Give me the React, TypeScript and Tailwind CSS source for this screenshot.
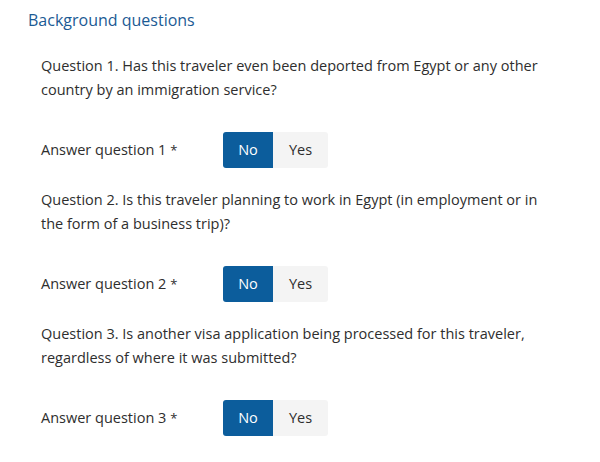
import React from "react";

const questions = [
  "Question 1. Has this traveler even been deported from Egypt or any other country by an immigration service?",
  "Question 2. Is this traveler planning to work in Egypt (in employment or in the form of a business trip)?",
  "Question 3. Is another visa application being processed for this traveler, regardless of where it was submitted?",
];

export default function App() {
  return (
    <div className="w-[600px] h-[462px] bg-white overflow-hidden text-[#2e2e2e]" style={{ fontFamily: '"Open Sans", sans-serif' }}>
      <h2 className="pl-[28px] pt-[8px] text-[16px] leading-[24px] text-[#1b5a94]">Background questions</h2>
      <div className="pl-[41px] pr-[45px]">
        {questions.map((q, i) => (
          <div key={i} className={i === 0 ? "pt-[22px]" : "pt-[20px]"}>
            <p className="text-[14.5px] leading-[24px]">{q}</p>
            <div className="mt-[30px] flex items-center">
              <span className="w-[182px] text-[14.5px]">Answer question {i + 1} <span className="text-[13px]">*</span></span>
              <div className="flex h-[36px]">
                <button className="w-[50px] h-full rounded-l-[3px] bg-[#0c5d9c] text-white text-[14.5px]">No</button>
                <button className="w-[55px] h-full rounded-r-[3px] bg-[#f4f4f4] text-[#2e2e2e] text-[14.5px]">Yes</button>
              </div>
            </div>
          </div>
        ))}
      </div>
    </div>
  );
}
